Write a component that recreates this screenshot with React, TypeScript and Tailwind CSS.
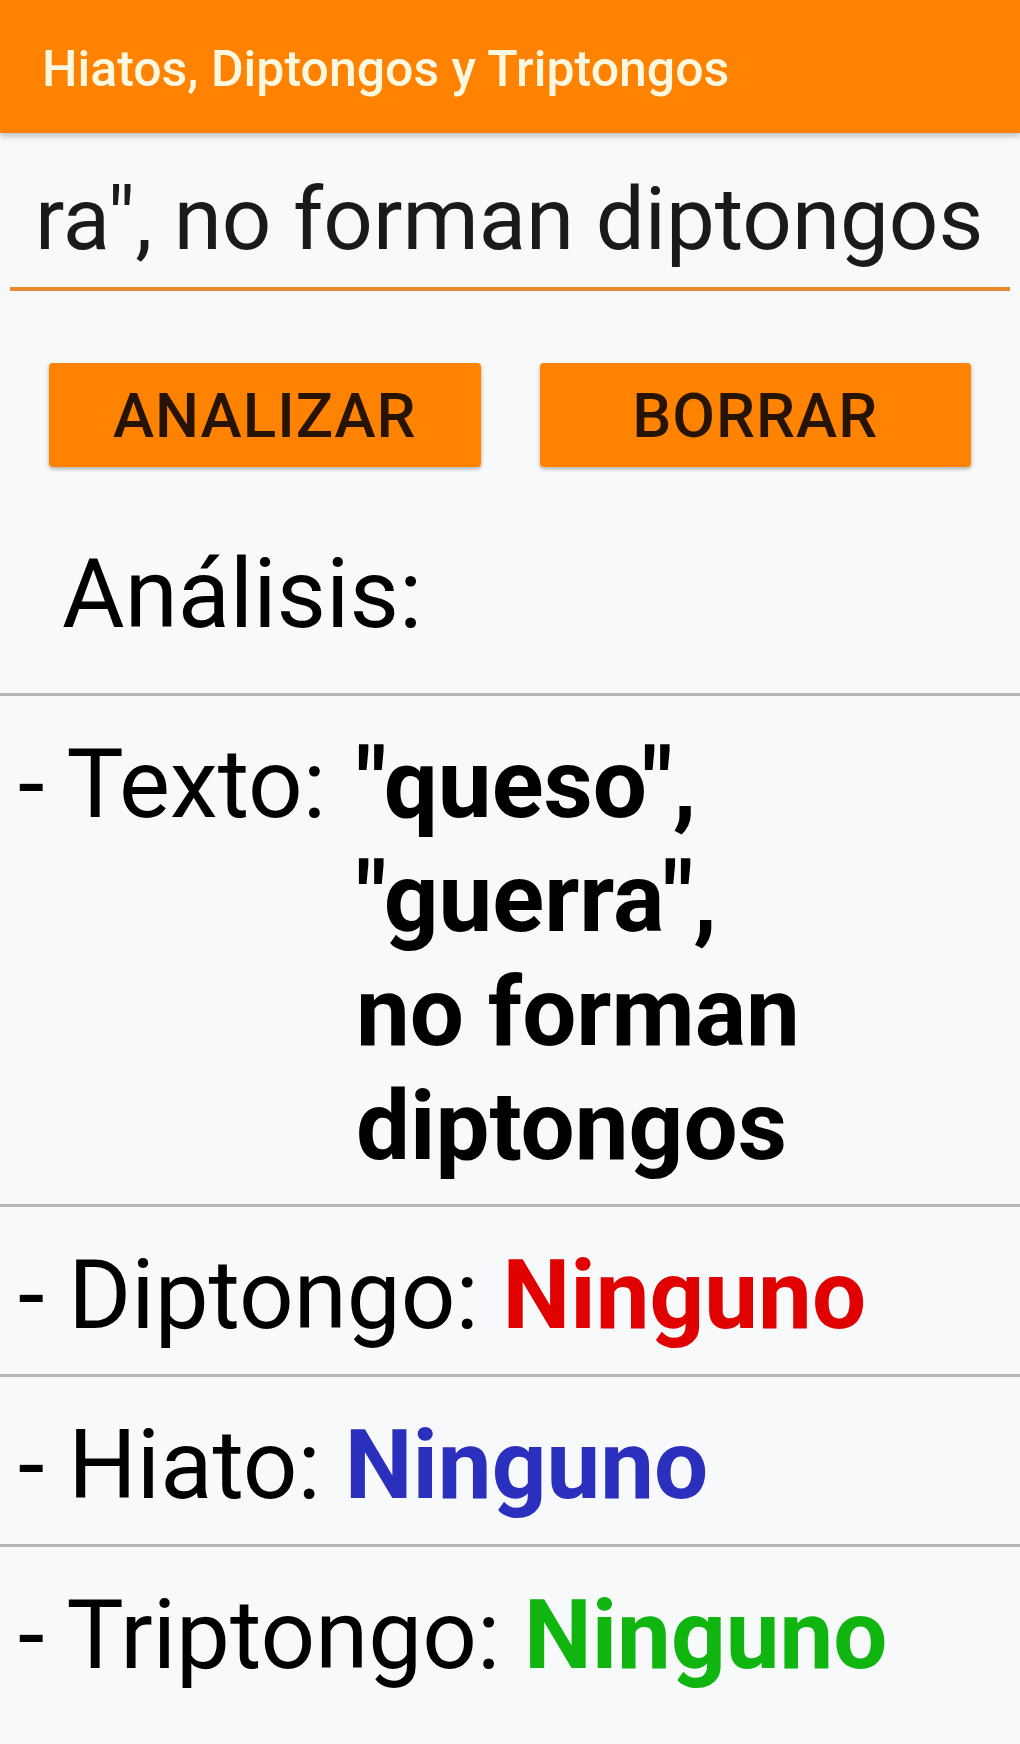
import React from 'react';

const Divider: React.FC = () => <div className="h-[3px] bg-[#b6b6b6]" />;

const ResultRow: React.FC<{ label: string; value: string; color: string }> = ({ label, value, color }) => (
  <div className="pl-[18px] pt-[31px] pb-[22px] text-[96px] leading-[114px] text-black whitespace-nowrap">
    <span>- {label}: </span>
    <span className={`font-bold ${color}`}>{value}</span>
  </div>
);

const App: React.FC = () => {
  return (
    <div className="min-h-[1744px] bg-[#f7f9fa] font-['Roboto',sans-serif] overflow-hidden">
      {/* Toolbar */}
      <div className="h-[133px] bg-[#ff8300] flex items-center pl-[42px] pt-[5px] shadow-[0_3px_6px_rgba(0,0,0,0.25)] relative z-10">
        <h1 className="text-[50px] font-medium text-[#fff8e1] leading-none">Hiatos, Diptongos y Triptongos</h1>
      </div>

      {/* Input */}
      <div className="pt-[36px]">
        <div className="pl-[35px] pr-[10px] text-[87px] leading-[101px] text-[#1a1a1a] whitespace-nowrap overflow-hidden">
          ra", no forman diptongos
        </div>
        <div className="mx-[10px] mt-[17px] h-[4px] bg-[#e8892b]" />
      </div>

      {/* Buttons */}
      <div className="flex gap-[59px] px-[49px] mt-[72px]">
        <button className="flex-1 h-[104px] rounded-[4px] bg-[#ff8300] shadow-[0_2px_4px_rgba(0,0,0,0.3)] text-[62px] font-medium tracking-[1px] text-black/85 flex items-center justify-center">
          ANALIZAR
        </button>
        <button className="flex-1 h-[104px] rounded-[4px] bg-[#ff8300] shadow-[0_2px_4px_rgba(0,0,0,0.3)] text-[62px] font-medium tracking-[1px] text-black/85 flex items-center justify-center">
          BORRAR
        </button>
      </div>

      {/* Results */}
      <div className="mt-[70px] pl-[62px] pb-[42px] text-[96px] leading-[114px] text-black">Análisis:</div>
      <Divider />

      <div className="flex pl-[18px] pt-[31px] pb-[21px] text-[96px] leading-[114px] text-black">
        <span className="whitespace-pre">- Texto: </span>
        <div className="font-bold ml-[6px]">
          <div>"queso",</div>
          <div>"guerra",</div>
          <div>no forman</div>
          <div>diptongos</div>
        </div>
      </div>
      <Divider />
      <ResultRow label="Diptongo" value="Ninguno" color="text-[#e10000]" />
      <Divider />
      <ResultRow label="Hiato" value="Ninguno" color="text-[#2b2fbd]" />
      <Divider />
      <ResultRow label="Triptongo" value="Ninguno" color="text-[#10b510]" />
    </div>
  );
};

export default App;
